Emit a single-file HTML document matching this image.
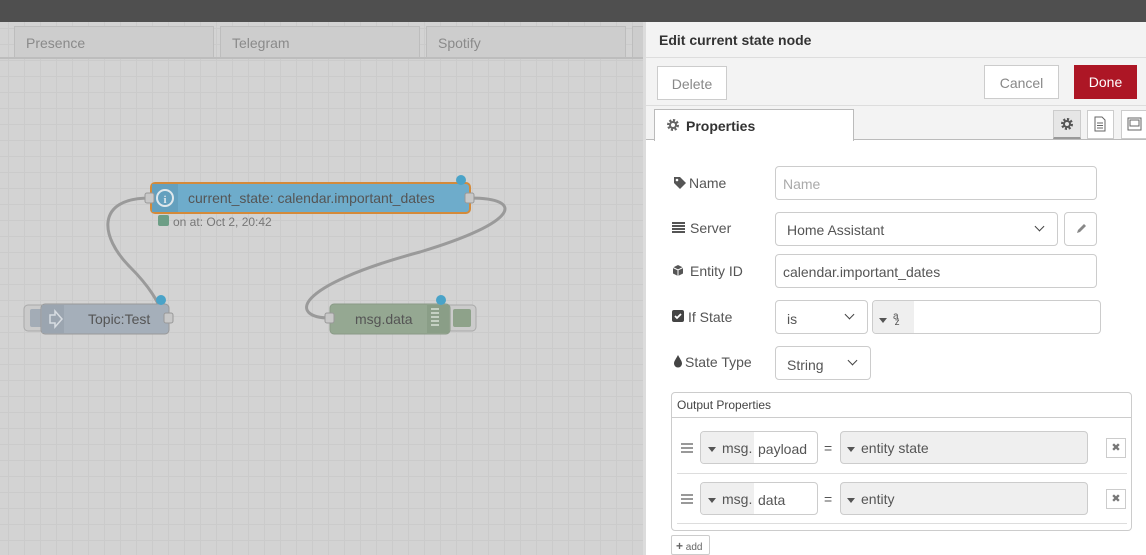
<!DOCTYPE html>
<html><head><style>
*{box-sizing:border-box;margin:0;padding:0}
body{width:1146px;height:555px;overflow:hidden;font-family:"Liberation Sans",sans-serif;position:relative;background:#fff;color:#555}
.a{position:absolute}
#top{left:0;top:0;width:1146px;height:22px;background:#4f4f4f}
#canvas{left:0;top:22px;width:643px;height:533px;background-color:#d3d3d3;
background-image:linear-gradient(#cbcbcb 1px,transparent 1px),linear-gradient(90deg,#cbcbcb 1px,transparent 1px);background-size:16px 16px;background-position:8px 6px;overflow:hidden}
.tab{top:4px;height:31px;background:#cdcdcd;border:1px solid #bdbdbd;border-bottom:none;color:#8a8a8a;font-size:14px;padding:8px 0 0 11px}
#tabbar{left:0;top:35px;width:643px;height:2px;background:#bdbdbd}
#panel{left:643px;top:22px;width:503px;height:533px;background:#fff;border-left:3px solid #dcdcdc}
.btn{border:1px solid #ccc;background:#fff;color:#888;font-size:14px;text-align:center}
.lbl{font-size:14px;color:#555;left:27px}
.inp{border:1px solid #ccc;border-radius:4px;background:#fff;font-size:14px;color:#555}
.chev{position:absolute;width:7px;height:7px;border-right:1.5px solid #444;border-bottom:1.5px solid #444;transform:rotate(45deg)}
.tri{display:inline-block;width:0;height:0;border-left:4px solid transparent;border-right:4px solid transparent;border-top:5px solid #555;vertical-align:middle;margin-right:6px}
.ham{width:12px;height:10px;border-top:2px solid #999;border-bottom:2px solid #999}
.ham div{margin-top:2px;border-top:2px solid #999}
</style></head><body>
<div id="top" class="a"></div>
<div id="canvas" class="a">
  <div class="tab a" style="left:14px;width:200px">Presence</div>
  <div class="tab a" style="left:220px;width:200px">Telegram</div>
  <div class="tab a" style="left:426px;width:200px">Spotify</div>
  <div class="tab a" style="left:632px;width:20px"></div>
  <div id="tabbar" class="a"></div>
  <svg class="a" style="left:0;top:0" width="643" height="533">
    <g fill="none" stroke="#9a9a9a" stroke-width="3">
      <path d="M150 176 C95 176 100 215 130 245 C165 280 160 296 168 296"/>
      <path d="M470 176 C525 176 520 200 420 230 C290 265 290 296 330 296"/>
    </g>
    <rect x="151" y="161" width="319" height="30" rx="4" fill="#6eaccb" stroke="#d48a3a" stroke-width="2"/>
    <rect x="152" y="162" width="26" height="28" fill="#64a0be"/>
    <circle cx="165" cy="176" r="8" fill="none" stroke="#e0e8ec" stroke-width="2"/>
    <text x="165" y="181" font-size="11" fill="#e0e8ec" text-anchor="middle" font-family="Liberation Serif" font-weight="bold">i</text>
    <text x="188" y="181" font-size="14" fill="#555">current_state: calendar.important_dates</text>
    <rect x="145" y="171" width="9" height="10" rx="2" fill="#c8c8c8" stroke="#999"/>
    <rect x="465" y="171" width="9" height="10" rx="2" fill="#c8c8c8" stroke="#999"/>
    <circle cx="461" cy="158" r="5" fill="#4aa3c8"/>
    <rect x="158" y="193" width="11" height="11" rx="2" fill="#6d9e86"/>
    <text x="173" y="204" font-size="12" fill="#777">on at: Oct 2, 20:42</text>
    <rect x="24" y="283" width="30" height="26" rx="4" fill="#cbcbcb" stroke="#aaa"/>
    <rect x="30" y="287" width="16" height="18" rx="2" fill="#a3acb6"/>
    <rect x="41" y="282" width="128" height="30" rx="4" fill="#a5afba" stroke="#999"/>
    <rect x="42" y="283" width="22" height="28" fill="#9ba5b0"/>
    <path d="M50 293 h5 v-4 l7 8 -7 8 v-4 h-5z" stroke="#d8dde2" stroke-width="1.5" fill="none"/>
    <text x="88" y="302" font-size="14" fill="#555">Topic:Test</text>
    <rect x="164" y="291" width="9" height="10" rx="2" fill="#c8c8c8" stroke="#999"/>
    <circle cx="161" cy="278" r="5" fill="#4aa3c8"/>
    <rect x="440" y="283" width="36" height="26" rx="4" fill="#cbcbcb" stroke="#aaa"/>
    <rect x="453" y="287" width="18" height="18" rx="2" fill="#8ea28a"/>
    <rect x="330" y="282" width="120" height="30" rx="4" fill="#95a892" stroke="#8a9a87"/>
    <rect x="427" y="283" width="22" height="28" fill="#8a9e87"/>
    <path d="M431 287h8M431 291h8M431 295h8M431 299h8M431 303h8" stroke="#d8e0d6" stroke-width="1.5"/>
    <text x="355" y="302" font-size="14" fill="#555">msg.data</text>
    <rect x="325" y="291" width="9" height="10" rx="2" fill="#c8c8c8" stroke="#999"/>
    <circle cx="441" cy="278" r="5" fill="#4aa3c8"/>
  </svg>
</div>
<div class="a" style="left:646px;top:415px;width:3px;height:46px;background:#c4c4c4"></div>
<div id="panel" class="a">
  <div class="a" style="left:0;top:0;width:500px;height:36px;background:#f3f3f3;border-bottom:1px solid #ddd;font-weight:bold;font-size:14px;color:#333;padding:10px 0 0 13px">Edit current state node</div>
  <div class="a" style="left:0;top:36px;width:500px;height:48px;background:#f3f3f3;border-bottom:1px solid #ddd"></div>
  <div class="btn a" style="left:11px;top:44px;width:70px;height:34px;padding-top:9px">Delete</div>
  <div class="btn a" style="left:338px;top:43px;width:75px;height:34px;padding-top:9px">Cancel</div>
  <div class="a" style="left:428px;top:43px;width:63px;height:34px;background:#ad1625;color:#fff;font-size:14px;text-align:center;padding-top:9px">Done</div>
  <div class="a" style="left:0;top:84px;width:500px;height:34px;background:#f3f3f3;border-bottom:1px solid #bbb"></div>
  <div class="a" style="left:8px;top:87px;width:200px;height:32px;background:#fff;border:1px solid #bbb;border-bottom:none;font-weight:bold;font-size:14px;color:#333;padding:8px 0 0 31px">Properties</div>
  <svg class="a" style="left:20px;top:96px" width="14" height="14" viewBox="0 0 14 14"><circle cx="7" cy="7" r="4.5" fill="none" stroke="#666" stroke-width="3" stroke-dasharray="2 1.5"/><circle cx="7" cy="7" r="3" fill="none" stroke="#666" stroke-width="2"/></svg>
  <div class="a" style="left:407px;top:88px;width:28px;height:29px;background:#e6e6e6;border:1px solid #ccc;border-bottom:2px solid #999"></div>
  <svg class="a" style="left:414px;top:95px" width="14" height="14" viewBox="0 0 14 14"><circle cx="7" cy="7" r="4.5" fill="none" stroke="#555" stroke-width="3" stroke-dasharray="2 1.5"/><circle cx="7" cy="7" r="3" fill="none" stroke="#555" stroke-width="2"/></svg>
  <div class="a" style="left:441px;top:88px;width:27px;height:29px;background:#fff;border:1px solid #ccc"></div>
  <svg class="a" style="left:448px;top:94px" width="12" height="16"><path d="M1 1h7l3 3v11H1z M3 7h6M3 9.5h6M3 12h6" fill="none" stroke="#666"/></svg>
  <div class="a" style="left:475px;top:88px;width:28px;height:29px;background:#fff;border:1px solid #ccc"></div>
  <svg class="a" style="left:480px;top:94px" width="17" height="16"><rect x="2" y="2" width="13" height="12" fill="none" stroke="#666"/><rect x="4" y="4" width="9" height="6" fill="none" stroke="#666"/></svg>

  <svg class="a" style="left:27px;top:154px" width="14" height="14"><path d="M1 1h6l6 6-6 6-6-6z" fill="#555"/><circle cx="4" cy="4" r="1.3" fill="#fff"/></svg>
  <div class="lbl a" style="left:43px;top:153px">Name</div>
  <div class="inp a" style="left:129px;top:144px;width:322px;height:34px;padding:9px 0 0 7px;color:#aaa">Name</div>

  <svg class="a" style="left:26px;top:200px" width="13" height="12"><path d="M0 1h13M0 4h13M0 7h13M0 10h13" stroke="#555" stroke-width="2"/></svg>
  <div class="lbl a" style="left:44px;top:198px">Server</div>
  <div class="inp a" style="left:129px;top:190px;width:283px;height:34px;padding:9px 0 0 11px">Home Assistant<span class="chev" style="left:260px;top:10px"></span></div>
  <div class="inp a" style="left:418px;top:190px;width:33px;height:34px"><svg style="position:absolute;left:10px;top:10px" width="12" height="12"><path d="M2 10l1-3 6-6 2 2-6 6z" fill="#888"/></svg></div>

  <svg class="a" style="left:26px;top:242px" width="12" height="13"><path d="M6 1l5 2.5v6L6 12 1 9.5v-6z" fill="#555"/><path d="M1 3.5L6 6l5-2.5M6 6v6" stroke="#fff" fill="none"/></svg>
  <div class="lbl a" style="left:44px;top:241px">Entity ID</div>
  <div class="inp a" style="left:129px;top:232px;width:322px;height:34px;padding:9px 0 0 7px">calendar.important_dates</div>

  <div class="a" style="left:26px;top:288px;width:12px;height:12px;background:#444;border-radius:2px"></div>
  <svg class="a" style="left:26px;top:288px" width="12" height="12"><path d="M3 6l2 2 4-4" stroke="#fff" stroke-width="1.8" fill="none"/></svg>
  <div class="lbl a" style="left:42px;top:287px">If State</div>
  <div class="inp a" style="left:129px;top:278px;width:93px;height:34px;padding:10px 0 0 11px">is<span class="chev" style="left:70px;top:10px"></span></div>
  <div class="inp a" style="left:226px;top:278px;width:229px;height:34px;overflow:hidden"><div style="position:absolute;left:0;top:0;width:41px;height:34px;background:#efefef;padding:10px 0 0 6px"><span class="tri"></span><span style="font-size:10px;position:relative;top:-5px">a</span><span style="font-size:10px;position:relative;top:1px;margin-left:-4px">z</span></div></div>

  <svg class="a" style="left:27px;top:333px" width="10" height="13"><path d="M5 0C3 4 1 6 1 8.5a4 4 0 008 0C9 6 7 4 5 0z" fill="#444"/></svg>
  <div class="lbl a" style="left:39px;top:332px">State Type</div>
  <div class="inp a" style="left:129px;top:324px;width:96px;height:34px;padding:10px 0 0 11px">String<span class="chev" style="left:73px;top:10px"></span></div>

  <div class="a" style="left:25px;top:370px;width:461px;height:139px;border:1px solid #ccc;border-radius:4px"></div>
  <div class="a" style="left:26px;top:395px;width:459px;height:1px;background:#ccc"></div>
  <div class="a" style="left:31px;top:376px;font-size:12px;color:#444">Output Properties</div>

  <div class="a ham" style="left:35px;top:421px"><div></div></div>
  <div class="inp a" style="left:54px;top:409px;width:118px;height:33px;overflow:hidden"><div style="position:absolute;left:0;top:0;width:53px;height:33px;background:#efefef;padding:8px 0 0 7px"><span class="tri"></span>msg.</div><div style="position:absolute;left:57px;top:9px">payload</div></div>
  <div class="a" style="left:178px;top:418px;font-size:14px">=</div>
  <div class="inp a" style="left:194px;top:409px;width:248px;height:33px;background:#efefef;padding:8px 0 0 6px"><span class="tri"></span>entity state</div>
  <div class="a" style="left:460px;top:416px;width:20px;height:20px;border:1px solid #ccc;font-size:11px;color:#777;text-align:center;padding-top:2px">✖</div>
  <div class="a" style="left:31px;top:451px;width:450px;height:1px;background:#ddd"></div>

  <div class="a ham" style="left:35px;top:472px"><div></div></div>
  <div class="inp a" style="left:54px;top:460px;width:118px;height:33px;overflow:hidden"><div style="position:absolute;left:0;top:0;width:53px;height:33px;background:#efefef;padding:8px 0 0 7px"><span class="tri"></span>msg.</div><div style="position:absolute;left:57px;top:9px">data</div></div>
  <div class="a" style="left:178px;top:469px;font-size:14px">=</div>
  <div class="inp a" style="left:194px;top:460px;width:248px;height:33px;background:#efefef;padding:8px 0 0 6px"><span class="tri"></span>entity</div>
  <div class="a" style="left:460px;top:467px;width:20px;height:20px;border:1px solid #ccc;font-size:11px;color:#777;text-align:center;padding-top:2px">✖</div>
  <div class="a" style="left:31px;top:501px;width:450px;height:1px;background:#ddd"></div>

  <div class="a" style="left:25px;top:513px;width:39px;height:20px;border:1px solid #ccc;border-radius:2px;font-size:10px;color:#666;padding:3px 0 0 4px"><b style="font-size:12px">+</b> add</div>
</div>
</body></html>
